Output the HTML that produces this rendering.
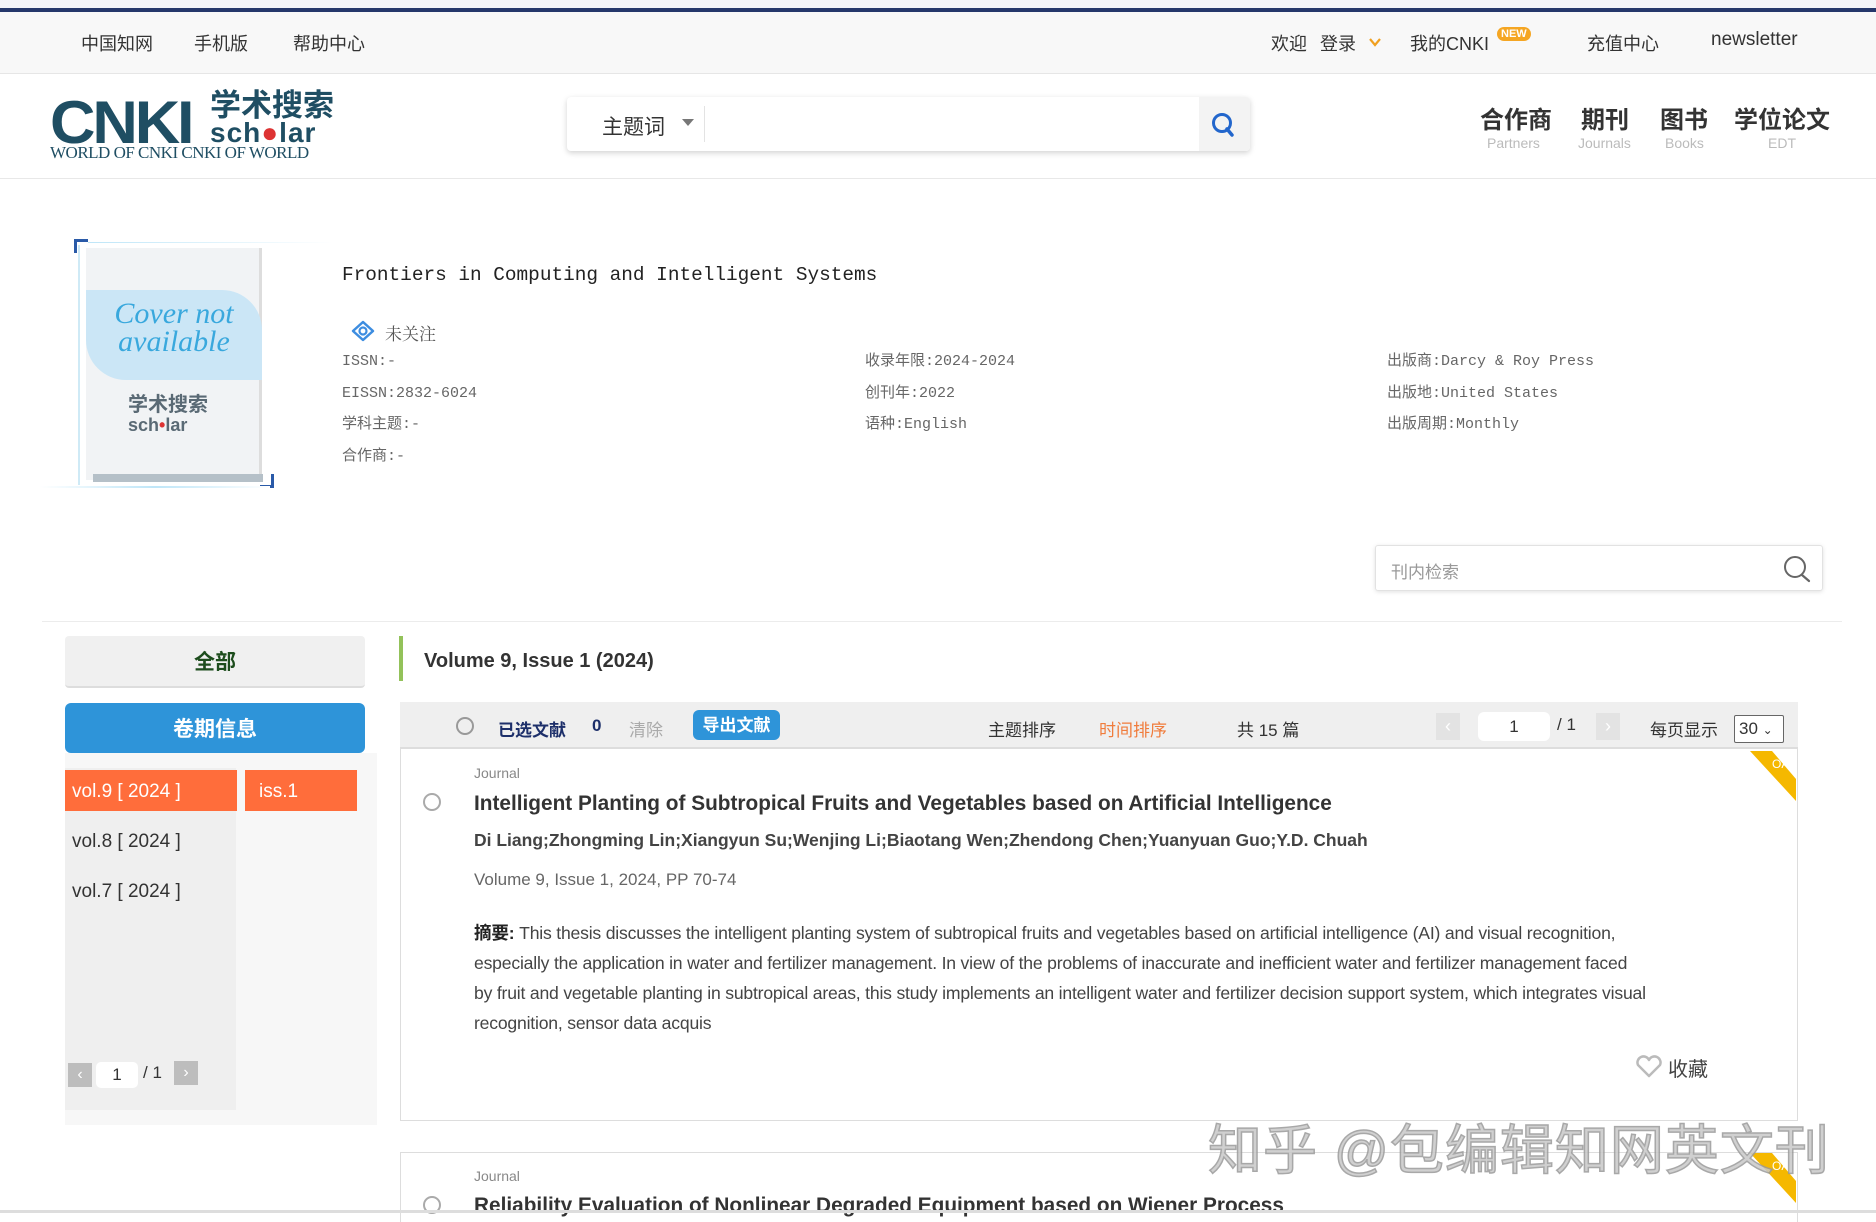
<!DOCTYPE html>
<html><head><meta charset="utf-8">
<style>
*{margin:0;padding:0;box-sizing:border-box}
body{width:1876px;height:1213px;overflow:hidden;background:#fff;font-family:"Liberation Sans","Noto Sans CJK SC",sans-serif;color:#333;position:relative}
.a{position:absolute;white-space:nowrap}
.mono{font-family:"Liberation Mono","Noto Sans CJK SC",monospace}
</style></head><body>
<div class="a" style="left:0;top:0;width:1876px;height:8px;background:#f3f4f8"></div>
<div class="a" style="left:0;top:8px;width:1876px;height:4px;background:#25376b"></div>
<div class="a" style="left:0;top:12px;width:1876px;height:62px;background:#f8f8f8;border-bottom:1px solid #e6e6e6"></div>
<div class="a" style="left:81px;top:30px;font-size:18px;color:#333">中国知网</div>
<div class="a" style="left:194px;top:30px;font-size:18px;color:#333">手机版</div>
<div class="a" style="left:293px;top:30px;font-size:18px;color:#333">帮助中心</div>
<div class="a" style="left:1271px;top:30px;font-size:18px;color:#333">欢迎</div>
<div class="a" style="left:1320px;top:30px;font-size:18px;color:#333">登录</div>
<svg class="a" style="left:1368px;top:36px" width="14" height="12"><path d="M2 3 L7 9 L12 3" stroke="#f0a020" stroke-width="2.2" fill="none"/></svg>
<div class="a" style="left:1410px;top:30px;font-size:18px;color:#333">我的CNKI</div>
<div class="a" style="left:1497px;top:27px;font-size:11px;color:#fff;background:#f5a623;border-radius:7px;padding:1px 4px;font-weight:bold">NEW</div>
<div class="a" style="left:1587px;top:30px;font-size:18px;color:#333">充值中心</div>
<div class="a" style="left:1711px;top:29px;font-size:19px;color:#333">newsletter</div>
<div class="a" style="left:0;top:178px;width:1876px;height:1px;background:#e8e8e8"></div>
<!-- logo -->
<div class="a" style="left:50px;top:88px;font-size:60px;font-weight:900;color:#1f4e63;letter-spacing:-3px;font-family:'Liberation Sans',sans-serif;transform:scaleX(1.05);transform-origin:left">CNKI</div>
<div class="a" style="left:210px;top:90px;font-size:31px;font-weight:bold;color:#1f4e63;line-height:32px">学术搜索</div>
<div class="a" style="left:210px;top:118px;font-size:28px;font-weight:900;color:#1f4e63;line-height:30px;letter-spacing:1px">sch<span style="color:#d33">●</span>lar</div>
<div class="a" style="left:50px;top:143px;font-size:17px;color:#1f4e63;font-family:'Liberation Serif',serif;letter-spacing:-0.5px">WORLD OF CNKI CNKI OF WORLD</div>
<!-- search -->
<div class="a" style="left:567px;top:97px;width:683px;height:54px;background:#fff;border-radius:4px;box-shadow:0 2px 6px rgba(0,0,0,.18)"></div>
<div class="a" style="left:602px;top:111px;font-size:21px;color:#333">主题词</div>
<svg class="a" style="left:682px;top:119px" width="12" height="8"><path d="M0 0 L12 0 L6 7Z" fill="#777"/></svg>
<div class="a" style="left:704px;top:106px;width:1px;height:36px;background:#e3e3e3"></div>
<div class="a" style="left:1199px;top:97px;width:51px;height:54px;background:#f3f3f3;border-radius:0 4px 4px 0"></div>
<svg class="a" style="left:1210px;top:110px" width="28" height="30"><circle cx="12" cy="13" r="8.5" stroke="#2266cc" stroke-width="3" fill="none"/><path d="M17 19 L22 25" stroke="#2266cc" stroke-width="3.5" stroke-linecap="round"/></svg>
<!-- nav -->
<div class="a" style="left:1480px;top:100px;font-size:24px;font-weight:bold;color:#333">合作商</div>
<div class="a" style="left:1487px;top:135px;font-size:14px;color:#bbb">Partners</div>
<div class="a" style="left:1581px;top:100px;font-size:24px;font-weight:bold;color:#333">期刊</div>
<div class="a" style="left:1578px;top:135px;font-size:14px;color:#bbb">Journals</div>
<div class="a" style="left:1660px;top:100px;font-size:24px;font-weight:bold;color:#333">图书</div>
<div class="a" style="left:1665px;top:135px;font-size:14px;color:#bbb">Books</div>
<div class="a" style="left:1734px;top:100px;font-size:24px;font-weight:bold;color:#333">学位论文</div>
<div class="a" style="left:1768px;top:135px;font-size:14px;color:#bbb">EDT</div>
<!-- cover -->
<div class="a" style="left:74px;top:239px;width:14px;height:14px;border-left:3px solid #2a5aa8;border-top:3px solid #2a5aa8"></div>
<div class="a" style="left:260px;top:474px;width:14px;height:14px;border-right:3px solid #2a5aa8;border-bottom:3px solid #2a5aa8"></div>
<div class="a" style="left:88px;top:242px;width:245px;height:1px;background:linear-gradient(90deg,#bfe6f8,#fff)"></div>
<div class="a" style="left:40px;top:486px;width:230px;height:2px;background:linear-gradient(90deg,#fff,#bfe6f8,#fff)"></div>
<div class="a" style="left:78px;top:245px;width:2px;height:240px;background:#cfeaf6"></div>
<div class="a" style="left:86px;top:248px;width:176px;height:232px;background:#f1f3f5;border-right:3px solid #ddd"></div>
<div class="a" style="left:86px;top:290px;width:176px;height:90px;background:#cbe6f6;border-radius:0 40px 0 40px"></div>
<div class="a" style="left:93px;top:474px;width:170px;height:8px;background:#b5c0c8"></div>
<div class="a" style="left:86px;top:300px;width:176px;text-align:center;font-family:'Liberation Serif',serif;font-style:italic;font-size:30px;color:#39a8dd;line-height:28px;white-space:normal">Cover not available</div>
<div class="a" style="left:128px;top:395px;font-size:20px;font-weight:bold;color:#5a6a75;line-height:20px">学术搜索<br><span style="font-size:18px">sch<span style="color:#d33">•</span>lar</span></div>
<!-- info -->
<div class="a mono" style="left:342px;top:264px;font-size:19.4px;color:#222">Frontiers in Computing and Intelligent Systems</div>
<svg class="a" style="left:351px;top:319px" width="24" height="24"><path d="M2 12 L12 3 L22 12 L12 21Z" fill="none" stroke="#3d8de0" stroke-width="2.5" stroke-linejoin="round"/><circle cx="12" cy="12" r="3.5" fill="none" stroke="#3d8de0" stroke-width="2.2"/></svg>
<div class="a" style="left:385px;top:320px;font-size:17px;color:#555;font-family:'Liberation Serif','Noto Serif CJK SC',serif">未关注</div>
<div class="a mono" style="left:342px;top:346px;font-size:15px;color:#666;line-height:31.5px">ISSN:-<br>EISSN:2832-6024<br>学科主题:-<br>合作商:-</div>
<div class="a mono" style="left:865px;top:346px;font-size:15px;color:#666;line-height:31.5px">收录年限:2024-2024<br>创刊年:2022<br>语种:English</div>
<div class="a mono" style="left:1387px;top:346px;font-size:15px;color:#666;line-height:31.5px">出版商:Darcy &amp; Roy Press<br>出版地:United States<br>出版周期:Monthly</div>
<!-- inner search -->
<div class="a" style="left:1375px;top:545px;width:448px;height:46px;border:1px solid #e2e2e2;border-radius:3px;box-shadow:0 1px 4px rgba(0,0,0,.12)"></div>
<div class="a" style="left:1391px;top:558px;font-size:17px;color:#999">刊内检索</div>
<svg class="a" style="left:1782px;top:555px" width="30" height="28"><circle cx="13" cy="12" r="10" stroke="#666" stroke-width="2" fill="none"/><path d="M20 20 L27 26" stroke="#666" stroke-width="2.2" stroke-linecap="round"/></svg>
<div class="a" style="left:42px;top:621px;width:1800px;height:1px;background:#ececec"></div>
<!-- sidebar -->
<div class="a" style="left:65px;top:636px;width:300px;height:52px;background:#f0f0f0;border-radius:4px;border-bottom:2px solid #ddd;text-align:center;line-height:54px;font-size:21px;font-weight:bold;color:#1d4d1d">全部</div>
<div class="a" style="left:65px;top:703px;width:300px;height:50px;background:#2e94d9;border-radius:6px;text-align:center;line-height:53px;font-size:21px;font-weight:bold;color:#fff">卷期信息</div>
<div class="a" style="left:65px;top:753px;width:312px;height:372px;background:#f7f7f7"></div>
<div class="a" style="left:65px;top:768px;width:171px;height:342px;background:#efefef"></div>
<div class="a" style="left:65px;top:770px;width:172px;height:41px;background:#ff6d3b;color:#fff;font-size:19px;line-height:44px;padding-left:7px">vol.9 [ 2024 ]</div>
<div class="a" style="left:245px;top:770px;width:112px;height:41px;background:#ff6d3b;color:#fff;font-size:19px;line-height:44px;padding-left:14px">iss.1</div>
<div class="a" style="left:72px;top:831px;font-size:19px;color:#333">vol.8 [ 2024 ]</div>
<div class="a" style="left:72px;top:881px;font-size:19px;color:#333">vol.7 [ 2024 ]</div>
<div class="a" style="left:68px;top:1063px;width:24px;height:24px;background:#bdbdbd;color:#fff;text-align:center;line-height:24px;font-size:16px">‹</div>
<div class="a" style="left:96px;top:1062px;width:42px;height:26px;background:#fff;border-radius:5px;text-align:center;line-height:26px;font-size:17px">1</div>
<div class="a" style="left:143px;top:1063px;font-size:17px">/ 1</div>
<div class="a" style="left:174px;top:1061px;width:24px;height:24px;background:#bdbdbd;color:#fff;text-align:center;line-height:24px;font-size:16px">›</div>
<!-- volume header -->
<div class="a" style="left:399px;top:636px;width:4px;height:45px;background:#93c25a"></div>
<div class="a" style="left:424px;top:650px;font-size:20px;font-weight:bold;color:#333">Volume 9, Issue 1 (2024)</div>
<!-- toolbar -->
<div class="a" style="left:400px;top:702px;width:1398px;height:47px;background:#efefef;border-bottom:2px solid #ddd"></div>
<div class="a" style="left:456px;top:717px;width:18px;height:18px;border:2px solid #999;border-radius:50%"></div>
<div class="a" style="left:498px;top:716px;font-size:17px;font-weight:bold;color:#1d2f6a">已选文献</div>
<div class="a" style="left:592px;top:716px;font-size:17px;font-weight:bold;color:#1d2f6a">0</div>
<div class="a" style="left:629px;top:716px;font-size:17px;color:#aaa">清除</div>
<div class="a" style="left:693px;top:710px;width:87px;height:30px;background:#2e94d9;border-radius:6px;color:#fff;font-size:17px;font-weight:bold;text-align:center;line-height:31px">导出文献</div>
<div class="a" style="left:988px;top:716px;font-size:17px;color:#333">主题排序</div>
<div class="a" style="left:1099px;top:716px;font-size:17px;color:#f07c3c">时间排序</div>
<div class="a" style="left:1237px;top:716px;font-size:17px;color:#333">共 15 篇</div>
<div class="a" style="left:1436px;top:713px;width:24px;height:27px;background:#e3e3e3;color:#fff;text-align:center;line-height:27px;font-size:18px">‹</div>
<div class="a" style="left:1478px;top:712px;width:72px;height:29px;background:#fff;border-radius:6px;text-align:center;line-height:29px;font-size:17px">1</div>
<div class="a" style="left:1557px;top:715px;font-size:17px;color:#333">/ 1</div>
<div class="a" style="left:1596px;top:713px;width:24px;height:27px;background:#e3e3e3;color:#fff;text-align:center;line-height:27px;font-size:18px">›</div>
<div class="a" style="left:1650px;top:716px;font-size:17px;color:#333">每页显示</div>
<div class="a" style="left:1734px;top:715px;width:50px;height:28px;background:#fff;border:1px solid #666;border-radius:2px;font-size:17px;line-height:26px;padding-left:4px">30 <span style="font-size:12px">⌄</span></div>
<!-- card 1 -->
<div class="a" style="left:400px;top:749px;width:1398px;height:372px;border:1px solid #ddd;border-top:none"></div>
<svg class="a" style="left:1750px;top:751px" width="48" height="50"><path d="M0 0 L22 0 L46 28 L46 50Z" fill="#f5b800"/><text x="22" y="17" font-size="12" fill="#fff" font-family="Liberation Sans">OA</text></svg>
<div class="a" style="left:474px;top:765px;font-size:14px;color:#888">Journal</div>
<div class="a" style="left:423px;top:793px;width:18px;height:18px;border:2px solid #aaa;border-radius:50%"></div>
<div class="a" style="left:474px;top:792px;font-size:20.8px;font-weight:bold;color:#333">Intelligent Planting of Subtropical Fruits and Vegetables based on Artificial Intelligence</div>
<div class="a" style="left:474px;top:830px;font-size:17.5px;font-weight:bold;color:#444">Di Liang;Zhongming Lin;Xiangyun Su;Wenjing Li;Biaotang Wen;Zhendong Chen;Yuanyuan Guo;Y.D. Chuah</div>
<div class="a" style="left:474px;top:870px;font-size:17px;color:#666">Volume 9, Issue 1, 2024, PP 70-74</div>
<div class="a" style="left:474px;top:918px;font-size:17.6px;color:#444;line-height:30px;letter-spacing:-0.2px"><b style="color:#222">摘要:</b> This thesis discusses the intelligent planting system of subtropical fruits and vegetables based on artificial intelligence (AI) and visual recognition,<br>especially the application in water and fertilizer management. In view of the problems of inaccurate and inefficient water and fertilizer management faced<br>by fruit and vegetable planting in subtropical areas, this study implements an intelligent water and fertilizer decision support system, which integrates visual<br>recognition, sensor data acquis</div>
<svg class="a" style="left:1635px;top:1055px" width="28" height="24"><path d="M14 21 L3 10 A6 6 0 0 1 14 5 A6 6 0 0 1 25 10Z" fill="none" stroke="#bbb" stroke-width="2.5" stroke-linejoin="round"/></svg>
<div class="a" style="left:1668px;top:1053px;font-size:20px;color:#444">收藏</div>
<!-- card 2 -->
<div class="a" style="left:400px;top:1152px;width:1398px;height:70px;border:1px solid #ddd;border-bottom:none"></div>
<svg class="a" style="left:1750px;top:1153px" width="48" height="50"><path d="M0 0 L22 0 L46 28 L46 50Z" fill="#f5b800"/><text x="22" y="17" font-size="12" fill="#fff" font-family="Liberation Sans">OA</text></svg>
<div class="a" style="left:474px;top:1168px;font-size:14px;color:#888">Journal</div>
<div class="a" style="left:423px;top:1196px;width:18px;height:18px;border:2px solid #aaa;border-radius:50%"></div>
<div class="a" style="left:474px;top:1194px;font-size:20.8px;font-weight:bold;color:#333">Reliability Evaluation of Nonlinear Degraded Equipment based on Wiener Process</div>
<!-- watermark -->
<div class="a" style="left:1208px;top:1106px;font-size:54px;color:#c8c8c8;-webkit-text-stroke:1.5px #999;opacity:.85;letter-spacing:1px">知乎 @包编辑知网英文刊</div>
<div class="a" style="left:0;top:1210px;width:1876px;height:3px;background:#ddd"></div>
</body></html>
